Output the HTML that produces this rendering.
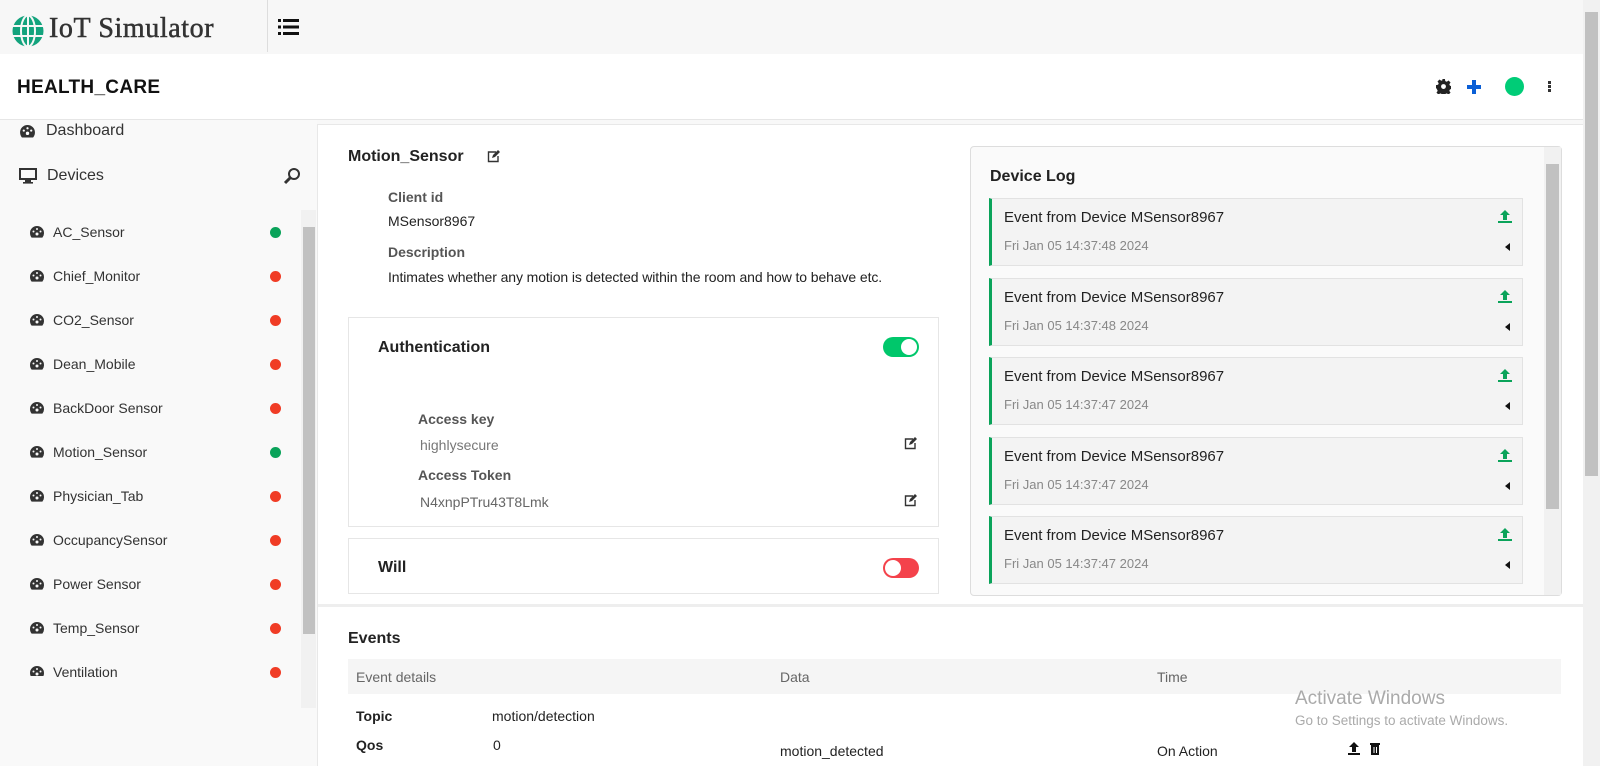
<!DOCTYPE html>
<html><head><meta charset="utf-8">
<style>
*{box-sizing:border-box;margin:0;padding:0}
body{width:1600px;height:766px;overflow:hidden;background:#f8f8f8;font-family:"Liberation Sans",sans-serif;color:#222;position:relative}
.abs{position:absolute}
.top{left:0;top:0;width:1583px;height:54px;background:#f7f7f7}
.hdr{left:0;top:54px;width:1583px;height:66px;background:#fff;border-bottom:1px solid #e6e6e6}
.side{left:0;top:120px;width:317px;height:646px;background:#f9f9f9}
.main{left:317px;top:124px;width:1266px;height:642px;background:#fff;border-left:1px solid #e8e8e8;border-top:1px solid #e8e8e8}
.t{position:absolute;white-space:nowrap;line-height:1}
.dot{position:absolute;width:11px;height:11px;border-radius:50%}
.item .t{font-size:14px;color:#333}
.box{position:absolute;border:1px solid #e6e6e6;background:#fff}
.log{position:absolute;left:989px;width:534px;height:68px;background:#f3f3f3;border:1px solid #e2e2e2;border-left:3px solid #0aa35a}
.log .a{left:12px;top:11px;font-size:15px;color:#222}
.log .b{left:12px;top:40px;font-size:13px;color:#888}
.tog{position:absolute;width:36px;height:20px;border-radius:10px}
.tog i{position:absolute;top:2px;width:16px;height:16px;border-radius:50%;background:#fff}
</style></head><body>
<div class="abs top"></div>
<svg class="abs" style="left:12px;top:15px" width="32" height="32" viewBox="0 0 32 32"><circle cx="16" cy="16" r="15.5" fill="#13a37d"/><g stroke="#f7f7f7" stroke-width="2" fill="none"><ellipse cx="16" cy="16" rx="7" ry="15.5"/><line x1="16" y1="0" x2="16" y2="32"/><line x1="0" y1="11" x2="32" y2="11"/><line x1="0" y1="21" x2="32" y2="21"/></g></svg>
<div class="t" style="left:49px;top:15px;font-size:28px;color:#333;font-family:'Liberation Serif',serif;letter-spacing:.6px;-webkit-text-stroke:.5px #333">IoT Simulator</div>
<div class="abs" style="left:267px;top:0;width:1px;height:52px;background:#ddd"></div>
<svg class="abs" style="left:278px;top:18px" width="21" height="18" viewBox="0 0 21 18"><g fill="#111"><rect x="0" y="1" width="3" height="3"/><rect x="5" y="1" width="16" height="3"/><rect x="0" y="7.5" width="3" height="3"/><rect x="5" y="7.5" width="16" height="3"/><rect x="0" y="14" width="3" height="3"/><rect x="5" y="14" width="16" height="3"/></g></svg>
<div class="abs hdr"></div>
<div class="t" style="left:17px;top:78px;font-size:19px;font-weight:bold;color:#111;letter-spacing:.3px">HEALTH_CARE</div>
<svg class="abs" style="left:1436px;top:79px" width="15" height="15" viewBox="0 0 16 16"><path fill="#222" d="M6.5 0h3l.4 2.2 1.6.7 1.9-1.3 2.1 2.1-1.3 1.9.7 1.6 2.1.4v3l-2.1.4-.7 1.6 1.3 1.9-2.1 2.1-1.9-1.3-1.6.7-.4 2.1h-3l-.4-2.1-1.6-.7-1.9 1.3-2.1-2.1 1.3-1.9-.7-1.6L0 9.5v-3l2.2-.4.7-1.6-1.3-1.9 2.1-2.1 1.9 1.3 1.6-.7z"/><circle cx="8" cy="8" r="2.6" fill="#fff"/></svg>
<div class="abs" style="left:1467px;top:85px;width:14px;height:4px;background:#0a5fd6"></div>
<div class="abs" style="left:1472px;top:80px;width:4px;height:14px;background:#0a5fd6"></div>
<div class="dot" style="left:1505px;top:77px;width:19px;height:19px;background:#00cc77"></div>
<div class="abs" style="left:1548px;top:81px;width:3px;height:3px;background:#333;box-shadow:0 4px #333,0 8px #333"></div>
<div class="abs" style="left:1583px;top:0;width:17px;height:766px;background:#f1f1f1"></div>
<div class="abs" style="left:1585px;top:12px;width:13px;height:464px;background:#c1c1c1"></div>

<div class="abs side"></div>
<svg class="abs" style="left:20px;top:125px" width="15" height="13" viewBox="0 0 16 14"><path fill="#333" d="M8 0a8 8 0 0 0-8 8c0 2 .7 4 2 5.5h12A8 8 0 0 0 16 8 8 8 0 0 0 8 0z"/><circle cx="8" cy="9" r="1.8" fill="#fff"/><circle cx="4" cy="6" r="1.2" fill="#fff"/><circle cx="8" cy="3.5" r="1.2" fill="#fff"/><circle cx="12" cy="6" r="1.2" fill="#fff"/></svg>
<div class="t" style="left:46px;top:123px;font-size:16px;color:#333">Dashboard</div>
<svg class="abs" style="left:19px;top:168px" width="18" height="16" viewBox="0 0 18 16"><rect x="1" y="1" width="16" height="10" fill="none" stroke="#333" stroke-width="2"/><rect x="6" y="12" width="6" height="2" fill="#333"/><rect x="4" y="14" width="10" height="1.6" fill="#333"/></svg>
<div class="t" style="left:47px;top:168px;font-size:16px;color:#333">Devices</div>
<svg class="abs" style="left:283px;top:167px" width="18" height="18" viewBox="0 0 18 18"><circle cx="11" cy="7" r="5" fill="none" stroke="#333" stroke-width="2"/><line x1="7.5" y1="10.5" x2="2" y2="16" stroke="#333" stroke-width="3"/></svg>
<div class="abs" style="left:301px;top:210px;width:15px;height:498px;background:#f1f1f1"></div>
<div class="abs" style="left:303px;top:227px;width:12px;height:407px;background:#c1c1c1"></div>
<div class="item">
<div class="t" style="left:53px;top:225px">AC_Sensor</div><div class="dot" style="left:270px;top:227px;background:#0aa35a"></div>
<div class="t" style="left:53px;top:269px">Chief_Monitor</div><div class="dot" style="left:270px;top:271px;background:#f03c25"></div>
<div class="t" style="left:53px;top:313px">CO2_Sensor</div><div class="dot" style="left:270px;top:315px;background:#f03c25"></div>
<div class="t" style="left:53px;top:357px">Dean_Mobile</div><div class="dot" style="left:270px;top:359px;background:#f03c25"></div>
<div class="t" style="left:53px;top:401px">BackDoor Sensor</div><div class="dot" style="left:270px;top:403px;background:#f03c25"></div>
<div class="t" style="left:53px;top:445px">Motion_Sensor</div><div class="dot" style="left:270px;top:447px;background:#0aa35a"></div>
<div class="t" style="left:53px;top:489px">Physician_Tab</div><div class="dot" style="left:270px;top:491px;background:#f03c25"></div>
<div class="t" style="left:53px;top:533px">OccupancySensor</div><div class="dot" style="left:270px;top:535px;background:#f03c25"></div>
<div class="t" style="left:53px;top:577px">Power Sensor</div><div class="dot" style="left:270px;top:579px;background:#f03c25"></div>
<div class="t" style="left:53px;top:621px">Temp_Sensor</div><div class="dot" style="left:270px;top:623px;background:#f03c25"></div>
<div class="t" style="left:53px;top:665px">Ventilation</div><div class="dot" style="left:270px;top:667px;background:#f03c25"></div>
</div>
<svg width="0" height="0" style="position:absolute"><defs><g id="g"><path fill="#333" d="M7 0a7 7 0 0 0-7 7c0 1.7.6 3.3 1.6 4.6h10.8A7 7 0 0 0 14 7 7 7 0 0 0 7 0z"/><circle cx="7" cy="8" r="1.5" fill="#f9f9f9"/><circle cx="3.5" cy="5.5" r="1" fill="#f9f9f9"/><circle cx="7" cy="3" r="1" fill="#f9f9f9"/><circle cx="10.5" cy="5.5" r="1" fill="#f9f9f9"/></g></defs></svg>
<svg class="abs" style="left:30px;top:226px" width="14" height="450"><use href="#g"/><use href="#g" y="44"/><use href="#g" y="88"/><use href="#g" y="132"/><use href="#g" y="176"/><use href="#g" y="220"/><use href="#g" y="264"/><use href="#g" y="308"/><use href="#g" y="352"/><use href="#g" y="396"/><use href="#g" y="440"/></svg>

<div class="abs main"></div>
<div class="abs" style="left:318px;top:604px;width:1265px;height:3px;background:#eee"></div>
<div class="t" style="left:348px;top:149px;font-size:16px;font-weight:bold;color:#222">Motion_Sensor</div>
<svg class="abs" style="left:487px;top:150px" width="13" height="13" viewBox="0 0 13 13"><path d="M9 2H1.5v9.5H11V6" fill="none" stroke="#333" stroke-width="1.4"/><path d="M5 8l1-3 5-5 2 2-5 5z" fill="#333"/></svg>
<div class="t" style="left:388px;top:190px;font-size:14px;font-weight:bold;color:#555">Client id</div>
<div class="t" style="left:388px;top:214px;font-size:14px;color:#222">MSensor8967</div>
<div class="t" style="left:388px;top:245px;font-size:14px;font-weight:bold;color:#555">Description</div>
<div class="t" style="left:388px;top:270px;font-size:14px;color:#222;letter-spacing:-.1px">Intimates whether any motion is detected within the room and how to behave etc.</div>

<div class="box" style="left:348px;top:317px;width:591px;height:210px"></div>
<div class="t" style="left:378px;top:340px;font-size:16px;font-weight:bold">Authentication</div>
<div class="tog" style="left:883px;top:337px;background:#00c76b"><i style="right:2px"></i></div>
<div class="t" style="left:418px;top:412px;font-size:14px;font-weight:bold;color:#555">Access key</div>
<div class="t" style="left:420px;top:438px;font-size:14px;color:#777">highlysecure</div>
<div class="t" style="left:418px;top:468px;font-size:14px;font-weight:bold;color:#555">Access Token</div>
<div class="t" style="left:420px;top:495px;font-size:14px;color:#666">N4xnpPTru43T8Lmk</div>
<svg class="abs" style="left:904px;top:437px" width="13" height="13" viewBox="0 0 13 13"><path d="M9 2H1.5v9.5H11V6" fill="none" stroke="#333" stroke-width="1.4"/><path d="M5 8l1-3 5-5 2 2-5 5z" fill="#333"/></svg>
<svg class="abs" style="left:904px;top:494px" width="13" height="13" viewBox="0 0 13 13"><path d="M9 2H1.5v9.5H11V6" fill="none" stroke="#333" stroke-width="1.4"/><path d="M5 8l1-3 5-5 2 2-5 5z" fill="#333"/></svg>
<div class="box" style="left:348px;top:538px;width:591px;height:56px"></div>
<div class="t" style="left:378px;top:560px;font-size:16px;font-weight:bold">Will</div>
<div class="tog" style="left:883px;top:558px;background:#f4424b"><i style="left:2px"></i></div>

<div class="abs" style="left:970px;top:146px;width:592px;height:450px;border:1px solid #ddd;border-radius:4px;background:#fafafa"></div>
<div class="abs" style="left:1544px;top:147px;width:17px;height:448px;background:#f1f1f1"></div>
<div class="abs" style="left:1546px;top:164px;width:13px;height:345px;background:#c1c1c1"></div>
<div class="t" style="left:990px;top:169px;font-size:16px;font-weight:bold">Device Log</div>
<div class="log" style="top:198px"><div class="t a">Event from Device MSensor8967</div><div class="t b">Fri Jan 05 14:37:48 2024</div></div>
<div class="log" style="top:278px"><div class="t a">Event from Device MSensor8967</div><div class="t b">Fri Jan 05 14:37:48 2024</div></div>
<div class="log" style="top:357px"><div class="t a">Event from Device MSensor8967</div><div class="t b">Fri Jan 05 14:37:47 2024</div></div>
<div class="log" style="top:437px"><div class="t a">Event from Device MSensor8967</div><div class="t b">Fri Jan 05 14:37:47 2024</div></div>
<div class="log" style="top:516px"><div class="t a">Event from Device MSensor8967</div><div class="t b">Fri Jan 05 14:37:47 2024</div></div>
<svg class="abs" style="left:1498px;top:210px" width="16" height="380" viewBox="0 0 16 380"><defs><g id="u"><path d="M7 0l5 5H9v5H5V5H2z" fill="#0aa35a"/><rect x="0" y="11" width="14" height="2" fill="#0aa35a"/><path d="M12 41l-5-4 5-4z" fill="#111"/></g></defs><use href="#u"/><use href="#u" y="80"/><use href="#u" y="159"/><use href="#u" y="239"/><use href="#u" y="318"/></svg>

<div class="t" style="left:348px;top:631px;font-size:16px;font-weight:bold">Events</div>
<div class="abs" style="left:348px;top:659px;width:1213px;height:35px;background:#f5f5f5"></div>
<div class="t" style="left:356px;top:670px;font-size:14px;color:#666">Event details</div>
<div class="t" style="left:780px;top:670px;font-size:14px;color:#666">Data</div>
<div class="t" style="left:1157px;top:670px;font-size:14px;color:#666">Time</div>
<div class="t" style="left:356px;top:709px;font-size:14px;font-weight:bold">Topic</div>
<div class="t" style="left:492px;top:709px;font-size:14px">motion/detection</div>
<div class="t" style="left:356px;top:738px;font-size:14px;font-weight:bold">Qos</div>
<div class="t" style="left:493px;top:738px;font-size:14px">0</div>
<div class="t" style="left:780px;top:744px;font-size:14px">motion_detected</div>
<div class="t" style="left:1157px;top:744px;font-size:14px">On Action</div>
<svg class="abs" style="left:1348px;top:742px" width="36" height="14" viewBox="0 0 36 14"><path d="M6 0l5 5H8v5H4V5H1z" fill="#111"/><rect x="0" y="11" width="12" height="2" fill="#111"/><rect x="22" y="1" width="10" height="2" fill="#111"/><rect x="23" y="3" width="8" height="10" fill="#111"/><rect x="25.5" y="5" width="1" height="6" fill="#fff"/><rect x="28" y="5" width="1" height="6" fill="#fff"/></svg>
<div class="t" style="left:1295px;top:689px;font-size:19px;color:#aaa">Activate Windows</div>
<div class="t" style="left:1295px;top:714px;font-size:13.5px;color:#aaa">Go to Settings to activate Windows.</div>
</body></html>
